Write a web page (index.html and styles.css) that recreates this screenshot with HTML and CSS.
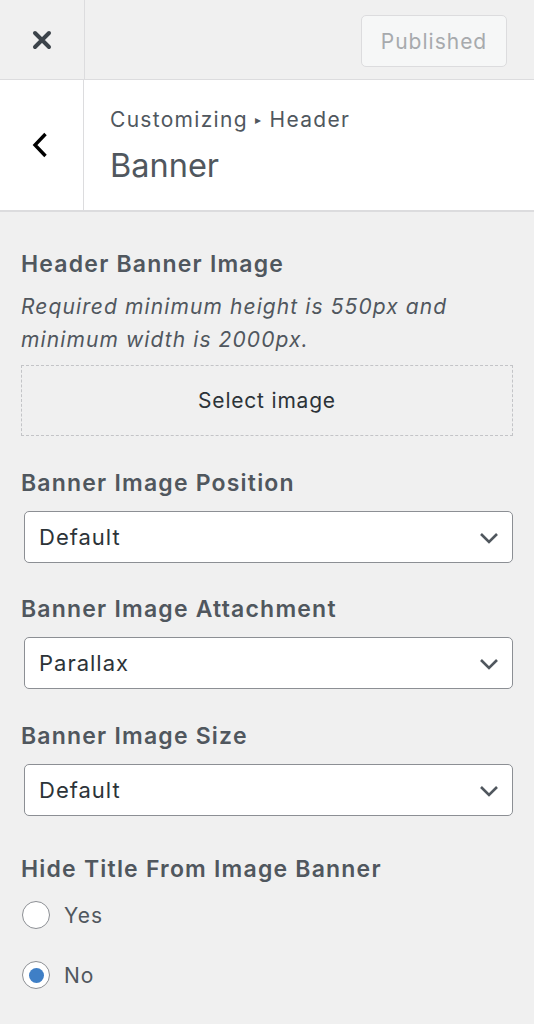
FILE: index.html
```html
<!DOCTYPE html>
<html>
<head>
<meta charset="utf-8">
<link rel="stylesheet" href="styles.css">
</head>
<body>
<div class="panel">
  <div class="topbar">
    <div class="close-cell">
      <svg width="20" height="20" viewBox="0 0 20 20"><path d="M3 3 L17 17 M17 3 L3 17" stroke="#3c434a" stroke-width="4" stroke-linecap="round"/></svg>
    </div>
    <div class="topbar-main">
      <button class="publish">Published</button>
    </div>
  </div>
  <div class="section-head">
    <div class="back-cell">
      <svg width="16" height="26" viewBox="0 0 16 26"><path d="M13.5 2 L3 13 L13.5 24" stroke="#000" stroke-width="3.4" fill="none" stroke-linejoin="miter"/></svg>
    </div>
    <div class="titles">
      <div class="crumb">Customizing <span class="tri">▸</span> Header</div>
      <div class="title">Banner</div>
    </div>
  </div>
  <div class="controls">
    <div class="control">
      <div class="label">Header Banner Image</div>
      <div class="desc">Required minimum height is 550px and minimum width is 2000px.</div>
      <div class="dropzone">Select image</div>
    </div>
    <div class="control">
      <div class="label">Banner Image Position</div>
      <div class="select"><span>Default</span><svg width="20" height="12" viewBox="0 0 20 12"><path d="M2 2 L10 10 L18 2" stroke="#50575e" stroke-width="2.6" fill="none"/></svg></div>
    </div>
    <div class="control">
      <div class="label">Banner Image Attachment</div>
      <div class="select"><span>Parallax</span><svg width="20" height="12" viewBox="0 0 20 12"><path d="M2 2 L10 10 L18 2" stroke="#50575e" stroke-width="2.6" fill="none"/></svg></div>
    </div>
    <div class="control">
      <div class="label">Banner Image Size</div>
      <div class="select"><span>Default</span><svg width="20" height="12" viewBox="0 0 20 12"><path d="M2 2 L10 10 L18 2" stroke="#50575e" stroke-width="2.6" fill="none"/></svg></div>
    </div>
    <div class="control radios">
      <div class="label">Hide Title From Image Banner</div>
      <div class="radio"><span class="circle"></span><span>Yes</span></div>
      <div class="radio"><span class="circle checked"></span><span>No</span></div>
    </div>
  </div>
</div>
</body>
</html>
```
FILE: styles.css
```css
html, body {
  margin: 0;
  padding: 0;
  background: #f0f0f0;
  font-family: Inter, "Noto Sans", sans-serif;
  color: #50575e;
}
.panel {
  width: 534px;
  min-height: 1024px;
  background: #f0f0f0;
}
.topbar {
  display: flex;
  height: 79px;
  border-bottom: 1px solid #dcdcde;
}
.close-cell {
  width: 84px;
  border-right: 1px solid #dcdcde;
  display: flex;
  align-items: center;
  justify-content: center;
}
.topbar-main {
  flex: 1;
  display: flex;
  justify-content: flex-end;
  align-items: flex-start;
  padding: 15px 27px 0 0;
}
.publish {
  width: 146px;
  height: 52px;
  background: #f6f7f7;
  border: 1px solid #dcdcde;
  border-radius: 5px;
  color: #a7aaad;
  font-family: Inter, "Noto Sans", sans-serif;
  font-size: 21px;
  letter-spacing: 1px;
  padding: 0;
}
.section-head {
  display: flex;
  height: 130px;
  background: #fff;
  border-bottom: 2px solid #dcdcde;
}
.back-cell {
  width: 84px;
  border-right: 1px solid #dcdcde;
  display: flex;
  align-items: center;
  padding-left: 32px;
  box-sizing: border-box;
}
.titles {
  padding: 26px 0 0 26px;
}
.crumb {
  font-size: 21px;
  line-height: 28px;
  letter-spacing: 1.3px;
  color: #50575e;
}
.tri {
  font-size: 12px;
  vertical-align: 3px;
}
.title {
  font-size: 32.5px;
  line-height: 40px;
  margin-top: 12px;
  color: #50575e;
}
.controls {
  padding: 37px 21px 0 21px;
}
.control {
  margin-bottom: 31.5px;
}
.label {
  font-size: 23px;
  font-weight: 600;
  line-height: 30px;
  letter-spacing: 1.2px;
  color: #50575e;
}
.desc {
  font-size: 21px;
  font-style: italic;
  line-height: 33px;
  letter-spacing: 1.1px;
  margin-top: 11px;
  color: #50575e;
}
.dropzone {
  margin-top: 9px;
  height: 69px;
  border: 1px dashed #c3c4c7;
  display: flex;
  align-items: center;
  justify-content: center;
  font-size: 21px;
  letter-spacing: 0.8px;
  color: #2c3338;
}
.select {
  margin: 13px 0 0 3px;
  height: 50px;
  border: 1px solid #8c8f94;
  border-radius: 5px;
  background: #fff;
  display: flex;
  align-items: center;
  justify-content: space-between;
  padding: 0 13px 0 14px;
  font-size: 22px;
  letter-spacing: 1px;
  color: #2c3338;
}
.select svg { margin-top: 2px; }
.radios { padding-top: 7px; }
.radios .label { margin-bottom: 17px; }
.radio {
  display: flex;
  align-items: center;
  gap: 14px;
  height: 28px;
  margin-bottom: 32px;
  font-size: 21px;
  letter-spacing: 1px;
  color: #50575e;
}
.circle {
  width: 26px;
  height: 26px;
  border: 1px solid #8c8f94;
  border-radius: 50%;
  background: #fff;
  display: flex;
  align-items: center;
  justify-content: center;
  margin-left: 1px;
}
.circle.checked::after {
  content: "";
  width: 15px;
  height: 15px;
  border-radius: 50%;
  background: #3f7fc6;
}
```
